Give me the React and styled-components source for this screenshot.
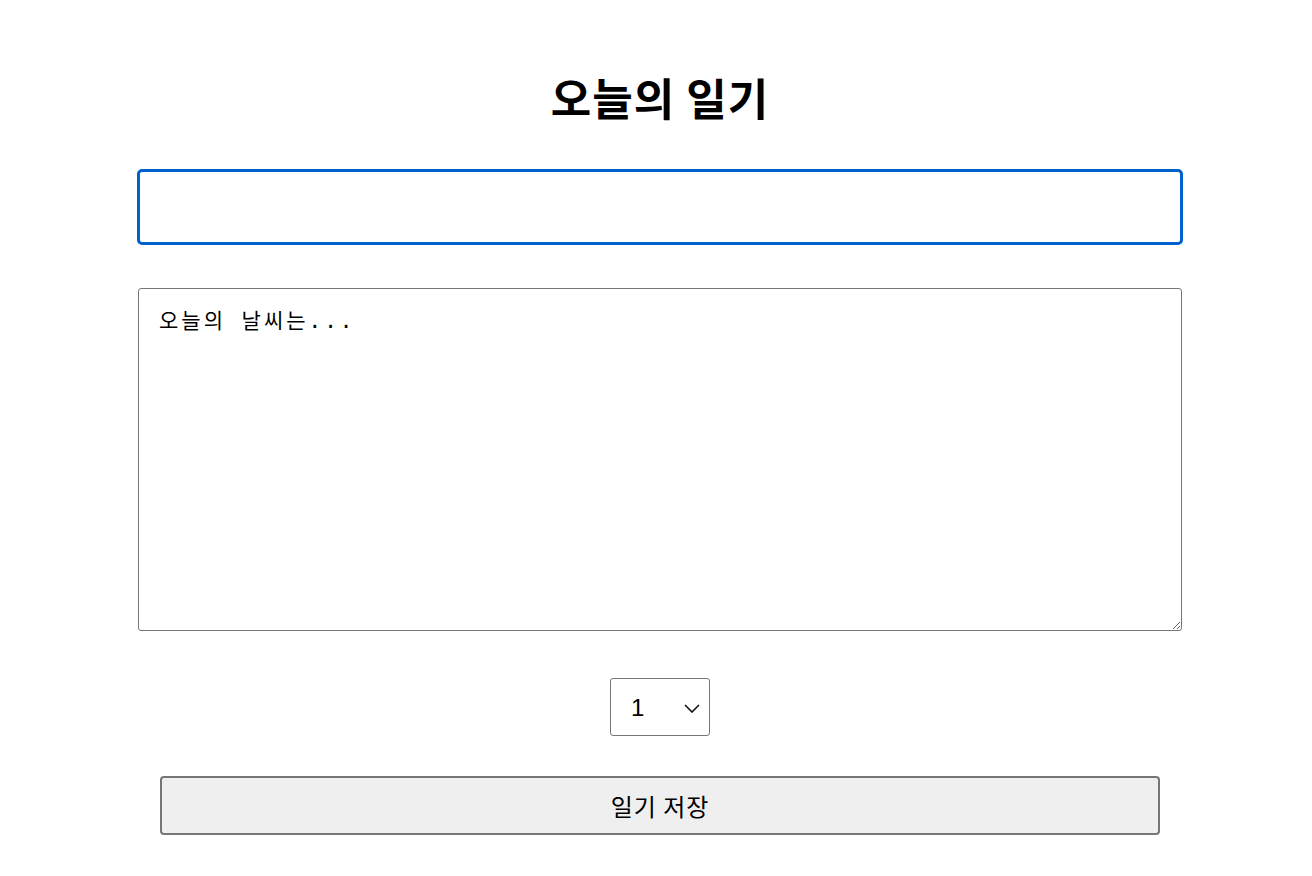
import styled, { createGlobalStyle } from "styled-components";

const GlobalStyle = createGlobalStyle`
  body {
    margin: 0;
    background: #fff;
    font-family: "Noto Sans CJK KR", "Noto Sans", sans-serif;
    color: #000;
  }
`;

const Page = styled.div`
  padding-left: 8px;
  display: flex;
  flex-direction: column;
  align-items: center;
`;

const Title = styled.h2`
  margin: 72px 0 0 0;
  font-size: 44px;
  line-height: 50px;
  font-weight: 700;
  letter-spacing: 1px;
`;

const AuthorInput = styled.input`
  box-sizing: border-box;
  margin-top: 47px;
  width: 1046px;
  height: 76px;
  border: 3px solid #0060cc;
  border-radius: 5px;
  outline: none;
  padding: 0 20px;
  font-size: 20px;
  font-family: inherit;
`;

const ContentArea = styled.textarea`
  box-sizing: border-box;
  margin-top: 43px;
  width: 1044px;
  height: 343px;
  border: 1px solid #767676;
  border-radius: 3px;
  padding: 15px 20px;
  font-size: 21px;
  letter-spacing: 3px;
  font-family: "DejaVu Sans Mono", "Noto Sans CJK KR", monospace;
  color: #000;
  resize: both;
`;

const SelectWrap = styled.div`
  position: relative;
  margin-top: 47px;
  width: 100px;
  height: 58px;
`;

const Select = styled.select`
  box-sizing: border-box;
  appearance: none;
  width: 100%;
  height: 100%;
  border: 1px solid #767676;
  border-radius: 3px;
  padding: 0 0 0 20px;
  font-size: 24px;
  font-family: "Liberation Sans", sans-serif;
  background: #fff;
  color: #000;
`;

const Chevron = styled.svg`
  position: absolute;
  right: 10px;
  top: 26px;
  pointer-events: none;
`;

const SaveButton = styled.button`
  box-sizing: border-box;
  margin-top: 40px;
  width: 1000px;
  height: 59px;
  border: 2px solid #767676;
  border-radius: 4px;
  background: #efefef;
  font-size: 24px;
  letter-spacing: 1px;
  font-family: inherit;
  color: #000;
`;

export default function App() {
  return (
    <>
      <GlobalStyle />
      <Page>
        <Title>오늘의 일기</Title>
        <AuthorInput defaultValue="" />
        <ContentArea defaultValue="오늘의 날씨는..." />
        <SelectWrap>
          <Select defaultValue="1">
            {[1, 2, 3, 4, 5].map((n) => (
              <option key={n} value={n}>
                {n}
              </option>
            ))}
          </Select>
          <Chevron width="16" height="9" viewBox="0 0 16 9">
            <polyline points="1,1 8,8 15,1" fill="none" stroke="#111" strokeWidth="1.6" />
          </Chevron>
        </SelectWrap>
        <SaveButton>일기 저장</SaveButton>
      </Page>
    </>
  );
}
